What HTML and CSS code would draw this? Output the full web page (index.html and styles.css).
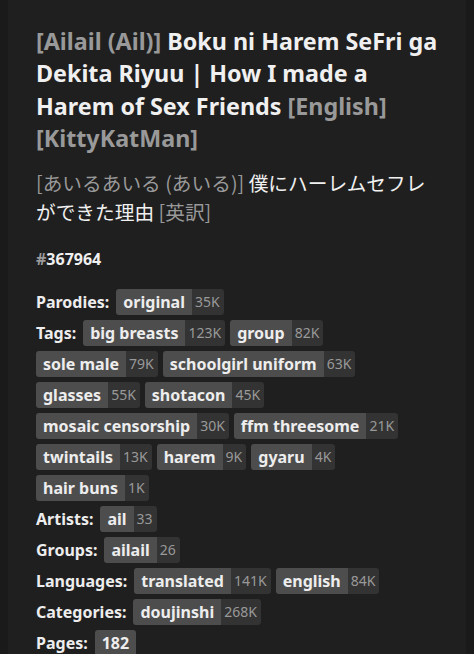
FILE: index.html
```html
<!DOCTYPE html>
<html>
<head>
<meta charset="utf-8">
<link rel="stylesheet" href="styles.css">
</head>
<body>
<div class="card">
  <div class="info">
    <h1 class="title"><span class="before">[Ailail (Ail)]</span> <span class="pretty">Boku ni Harem SeFri ga Dekita Riyuu | How I made a Harem of Sex Friends</span> <span class="after">[English] [KittyKatMan]</span></h1>
    <h2 class="title jp"><span class="before">[あいるあいる (あいる)]</span> <span class="pretty">僕にハーレムセフレができた理由</span> <span class="after">[英訳]</span></h2>
    <h3 class="gid"><span class="hash">#</span>367964</h3>
    <section class="tags">
      <div class="field"><span class="label">Parodies:</span>
        <a class="tag"><span class="name">original</span><span class="count">35K</span></a>
      </div>
      <div class="field"><span class="label">Tags:</span>
        <a class="tag"><span class="name">big breasts</span><span class="count">123K</span></a>
        <a class="tag"><span class="name">group</span><span class="count">82K</span></a>
        <a class="tag"><span class="name">sole male</span><span class="count">79K</span></a>
        <a class="tag"><span class="name">schoolgirl uniform</span><span class="count">63K</span></a>
        <a class="tag"><span class="name">glasses</span><span class="count">55K</span></a>
        <a class="tag"><span class="name">shotacon</span><span class="count">45K</span></a>
        <a class="tag"><span class="name">mosaic censorship</span><span class="count">30K</span></a>
        <a class="tag"><span class="name">ffm threesome</span><span class="count">21K</span></a>
        <a class="tag"><span class="name">twintails</span><span class="count">13K</span></a>
        <a class="tag"><span class="name">harem</span><span class="count">9K</span></a>
        <a class="tag"><span class="name">gyaru</span><span class="count">4K</span></a>
        <a class="tag"><span class="name">hair buns</span><span class="count">1K</span></a>
      </div>
      <div class="field"><span class="label">Artists:</span>
        <a class="tag"><span class="name">ail</span><span class="count">33</span></a>
      </div>
      <div class="field"><span class="label">Groups:</span>
        <a class="tag"><span class="name">ailail</span><span class="count">26</span></a>
      </div>
      <div class="field"><span class="label">Languages:</span>
        <a class="tag"><span class="name">translated</span><span class="count">141K</span></a>
        <a class="tag"><span class="name">english</span><span class="count">84K</span></a>
      </div>
      <div class="field"><span class="label">Categories:</span>
        <a class="tag"><span class="name">doujinshi</span><span class="count">268K</span></a>
      </div>
      <div class="field"><span class="label">Pages:</span>
        <a class="tag"><span class="name">182</span></a>
      </div>
    </section>
  </div>
</div>
</body>
</html>
```

FILE: styles.css
```css
html, body {
  margin: 0;
  padding: 0;
  background: #1a1a1a;
  height: 100%;
  overflow: hidden;
}
body {
  font-family: "Noto Sans", "Noto Sans CJK JP", sans-serif;
  color: #f0f0f0;
}
.card {
  margin: 0 8px 0 8px;
  background: #1f1f1f;
  min-height: 100%;
  padding: 25px 26px 0 28px;
  box-sizing: border-box;
}
.info {
  width: 404px;
}
.title {
  margin: 0;
  font-weight: 700;
}
h1.title {
  font-size: 23.3px;
  line-height: 32.4px;
}
h2.title.jp {
  margin-top: 13px;
  font-size: 19.7px;
  line-height: 29px;
  font-weight: 400;
  font-family: "Noto Sans CJK JP", "Noto Sans", sans-serif;
}
.before, .after {
  color: #999;
}
.gid {
  margin: 22px 0 0 0;
  font-size: 16px;
  line-height: 22px;
  font-weight: 700;
}
.hash {
  color: #999;
}
.tags {
  margin-top: 19px;
  display: flex;
  flex-direction: column;
  gap: 5px;
}
.field {
  display: flex;
  flex-wrap: wrap;
  gap: 5px;
  align-items: center;
}
.label {
  font-size: 16px;
  font-weight: 700;
  color: #ededed;
  margin-right: 2px;
  line-height: 26px;
}
.tag {
  display: inline-flex;
  height: 26px;
  border-radius: 3px;
  overflow: hidden;
  font-size: 16px;
  line-height: 26px;
}
.name {
  background: #4d4d4d;
  color: #ededed;
  font-weight: 700;
  padding: 0 7px;
}
.count {
  background: #333;
  color: #999;
  font-size: 14px;
  padding: 0 4px 0 3px;
}
```
